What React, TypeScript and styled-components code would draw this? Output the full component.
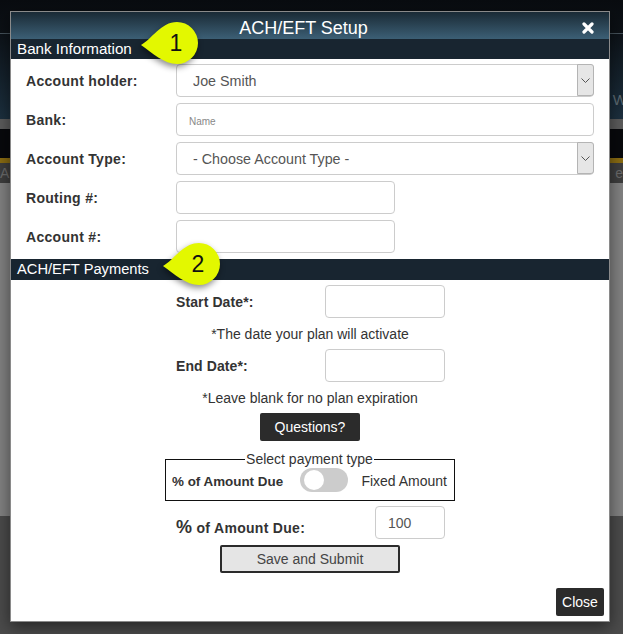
import React from 'react';
import styled, { createGlobalStyle } from 'styled-components';

const GlobalStyle = createGlobalStyle`
    html, body { margin: 0; padding: 0; height: 100%; background: #4a4a4a; }
    body { font-family: "Liberation Sans", Arial, sans-serif; overflow: hidden; }
    * { box-sizing: border-box; }
`;

// ── Dimmed page behind the modal ─────────────────────────────
const Page = styled.div`
    position: relative;
    width: 623px;
    height: 634px;
    overflow: hidden;
    display: flex;
    flex-direction: column;
`;

const TopStrip = styled.div`
    height: 34px;
    background: linear-gradient(#090c10, #0c1116);
    border-bottom: 1px solid #45525b;
`;

const NavBand = styled.div`
    height: 85px;
    background: linear-gradient(#0d1319, #1c303f);
    display: flex;
    justify-content: flex-end;
    align-items: center;
    padding-top: 46px;
    overflow: hidden;
    color: #5d6a72;
    font-size: 15px;
`;

const NavLetter = styled.span`
    margin-right: -4px;
`;

const GreyRule = styled.div`
    height: 10px;
    background: #5c5c5c;
`;

const BlackBand = styled.div`
    height: 29px;
    background: #08090c;
`;

const GoldRule = styled.div`
    height: 5px;
    background: #8a6c12;
`;

const MenuBand = styled.div`
    height: 20px;
    background: #3e3e3e;
    color: #6b6b6b;
    font-size: 14px;
    line-height: 20px;
    display: flex;
    justify-content: space-between;
`;

const ContentBand = styled.div`
    height: 333px;
    background: #828282;
`;

const FootBand = styled.div`
    flex: 1;
    background: #4b4b4b;
`;

// ── Modal ────────────────────────────────────────────────────
const Modal = styled.div`
    position: absolute;
    left: 10px;
    top: 11px;
    width: 600px;
    height: 611px;
    background: #fff;
    border: 1px solid #8a8a8a;
    box-shadow: 0 5px 15px rgba(0, 0, 0, 0.5);
    display: flex;
    flex-direction: column;
    color: #333;
`;

const Header = styled.div`
    height: 27px;
    flex: none;
    background: linear-gradient(#1a2a35, #3c5f75);
    color: #fff;
    font-size: 18px;
    line-height: 33px;
    text-align: center;
    padding-right: 13px;
    position: relative;
`;

const CloseX = styled.svg`
    position: absolute;
    right: 15px;
    top: 10px;
    width: 12px;
    height: 12px;
`;

const SectionBar = styled.div<{ $h: number; $size: number }>`
    height: ${p => p.$h}px;
    flex: none;
    background: #182530;
    color: #fff;
    font-size: ${p => p.$size}px;
    line-height: ${p => p.$h}px;
    padding-left: 6px;
`;

const BankForm = styled.div`
    padding: 5px 15px 6px 15px;
    display: flex;
    flex-direction: column;
    gap: 6px;
`;

const FormRow = styled.div`
    display: grid;
    grid-template-columns: 150px 1fr;
    align-items: center;
`;

const Label = styled.label`
    font-size: 14px;
    font-weight: bold;
    letter-spacing: 0.3px;
    color: #333;
`;

const SelectWrap = styled.div`
    position: relative;
    height: 33px;
`;

const Select = styled.select`
    appearance: none;
    width: 100%;
    height: 100%;
    border: 1px solid #ccc;
    border-radius: 4px;
    background: #fff;
    font-family: inherit;
    font-size: 14.3px;
    color: #555;
    padding: 0 16px;
`;

const SelectArrow = styled.span`
    position: absolute;
    right: 0;
    top: 0;
    width: 17px;
    height: 32px;
    background: #e6e6e6;
    border: 1px solid #b4b4b4;
    border-radius: 0 3px 3px 0;
    display: flex;
    align-items: center;
    justify-content: center;
`;

const Input = styled.input<{ $w?: number }>`
    display: block;
    width: ${p => (p.$w ? `${p.$w}px` : '100%')};
    height: 33px;
    border: 1px solid #ccc;
    border-radius: 4px;
    background: #fff;
    font-family: inherit;
    font-size: 14px;
    color: #555;
    padding: 0 12px;
    &::placeholder { font-size: 10px; color: #888; }
`;

const PlanForm = styled.div`
    padding-top: 5px;
    display: flex;
    flex-direction: column;
    align-items: center;
`;

const DateRow = styled.div`
    width: 270px;
    padding-left: 1px;
    display: flex;
    justify-content: space-between;
    align-items: center;
`;

const PlanLabel = styled(Label)`
    letter-spacing: 0.1px;
`;

const Hint = styled.div`
    font-size: 14px;
    line-height: 20px;
    margin: 6px 0 5px;
    color: #333;
`;

const DarkButton = styled.button`
    background: #2b2b2b;
    color: #fff;
    border: none;
    border-radius: 2px;
    height: 28px;
    font-family: inherit;
    font-size: 14px;
    padding: 0;
`;

const QuestionsButton = styled(DarkButton)`
    width: 100px;
`;

const PaymentType = styled.fieldset`
    width: 290px;
    height: 50px;
    margin: 10px 0 0;
    padding: 0 7px 0 6px;
    border: 1px solid #111;
    display: flex;
    align-items: center;
    justify-content: space-between;
`;

const PaymentLegend = styled.legend`
    margin: 0 auto;
    padding: 0 1px;
    font-size: 14px;
    line-height: 16px;
    color: #333;
`;

const OptionOn = styled.span`
    font-size: 13.4px;
    font-weight: bold;
    margin-top: 3px;
`;

const OptionOff = styled.span`
    font-size: 14px;
    margin-top: 3px;
`;

const Toggle = styled.span`
    width: 48px;
    height: 24px;
    margin: 1px 0 0 4px;
    border-radius: 12px;
    background: #ccc;
    padding: 2px 4px;
    display: block;
`;

const ToggleKnob = styled.span`
    display: block;
    width: 20px;
    height: 20px;
    border-radius: 50%;
    background: #fff;
`;

const AmountRow = styled(DateRow)`
    margin-top: 5px;
`;

const AmountLabel = styled(Label)`
    margin-top: 9px;
`;

const PercentSign = styled.span`
    font-size: 18px;
`;

const SaveButton = styled.button`
    width: 180px;
    height: 28px;
    margin-top: 6px;
    background: #e5e5e5;
    border: 2px solid #2b2b2b;
    border-radius: 2px;
    color: #444;
    font-family: inherit;
    font-size: 14px;
    padding: 0;
`;

const Footer = styled.div`
    margin-top: auto;
    padding: 0 5px 5px 0;
    display: flex;
    justify-content: flex-end;
`;

const CloseButton = styled(DarkButton)`
    width: 48px;
`;

// ── Numbered callouts laid over the screenshot ───────────────
const Callout = styled.div<{ $x: number; $y: number }>`
    position: absolute;
    left: ${p => p.$x}px;
    top: ${p => p.$y}px;
    width: 58px;
    height: 42px;
`;

const CalloutShape = styled.svg`
    display: block;
    overflow: visible;
    filter: drop-shadow(-1px 3px 3px rgba(0, 0, 0, 0.45));
`;

const CalloutNumber = styled.span`
    position: absolute;
    left: 24px;
    top: 5px;
    width: 22px;
    text-align: center;
    font-size: 23px;
    line-height: 32px;
    color: #111;
`;

const NumberedCallout: React.FC<{ n: number; x: number; y: number }> = ({ n, x, y }) => (
    <Callout $x={x} $y={y}>
        <CalloutShape width="58" height="42" viewBox="0 0 58 42">
            <path d="M0 23C11 17 20 0 36 0A21 21 0 1 1 36 42C23 42 11 31 0 23Z" fill="#e3f800" />
        </CalloutShape>
        <CalloutNumber>{n}</CalloutNumber>
    </Callout>
);

const Chevron: React.FC = () => (
    <svg width="9" height="5" viewBox="0 0 9 5" fill="none">
        <path d="M0.5 0.5L4.5 4.5L8.5 0.5" stroke="#555" strokeWidth="1" />
    </svg>
);

const App: React.FC = () => (
    <Page>
        <GlobalStyle />
        <TopStrip />
        <NavBand><NavLetter>W</NavLetter></NavBand>
        <GreyRule />
        <BlackBand />
        <GoldRule />
        <MenuBand>
            <span>A</span>
            <span>e</span>
        </MenuBand>
        <ContentBand />
        <FootBand />

        <Modal>
            <Header>
                ACH/EFT Setup
                <CloseX viewBox="0 0 12 12">
                    <path d="M2 2L10 10M10 2L2 10" stroke="#fff" strokeWidth="3.2" strokeLinecap="round" />
                </CloseX>
            </Header>
            <SectionBar $h={20} $size={15.2}>Bank Information</SectionBar>
            <BankForm>
                <FormRow>
                    <Label>Account holder:</Label>
                    <SelectWrap>
                        <Select defaultValue="joe">
                            <option value="joe">Joe Smith</option>
                        </Select>
                        <SelectArrow><Chevron /></SelectArrow>
                    </SelectWrap>
                </FormRow>
                <FormRow>
                    <Label>Bank:</Label>
                    <Input placeholder="Name" />
                </FormRow>
                <FormRow>
                    <Label>Account Type:</Label>
                    <SelectWrap>
                        <Select defaultValue="">
                            <option value="">- Choose Account Type -</option>
                        </Select>
                        <SelectArrow><Chevron /></SelectArrow>
                    </SelectWrap>
                </FormRow>
                <FormRow>
                    <Label>Routing #:</Label>
                    <Input $w={219} />
                </FormRow>
                <FormRow>
                    <Label>Account #:</Label>
                    <Input $w={219} />
                </FormRow>
            </BankForm>
            <SectionBar $h={21} $size={14.7}>ACH/EFT Payments</SectionBar>
            <PlanForm>
                <DateRow>
                    <PlanLabel>Start Date*:</PlanLabel>
                    <Input $w={120} />
                </DateRow>
                <Hint>*The date your plan will activate</Hint>
                <DateRow>
                    <PlanLabel>End Date*:</PlanLabel>
                    <Input $w={120} />
                </DateRow>
                <Hint>*Leave blank for no plan expiration</Hint>
                <QuestionsButton>Questions?</QuestionsButton>
                <PaymentType>
                    <PaymentLegend>Select payment type</PaymentLegend>
                    <OptionOn>% of Amount Due</OptionOn>
                    <Toggle><ToggleKnob /></Toggle>
                    <OptionOff>Fixed Amount</OptionOff>
                </PaymentType>
                <AmountRow>
                    <AmountLabel><PercentSign>%</PercentSign> of Amount Due:</AmountLabel>
                    <Input $w={70} defaultValue="100" />
                </AmountRow>
                <SaveButton>Save and Submit</SaveButton>
            </PlanForm>
            <Footer>
                <CloseButton>Close</CloseButton>
            </Footer>
        </Modal>

        <NumberedCallout n={1} x={141} y={22} />
        <NumberedCallout n={2} x={163} y={243} />
    </Page>
);

export default App;
